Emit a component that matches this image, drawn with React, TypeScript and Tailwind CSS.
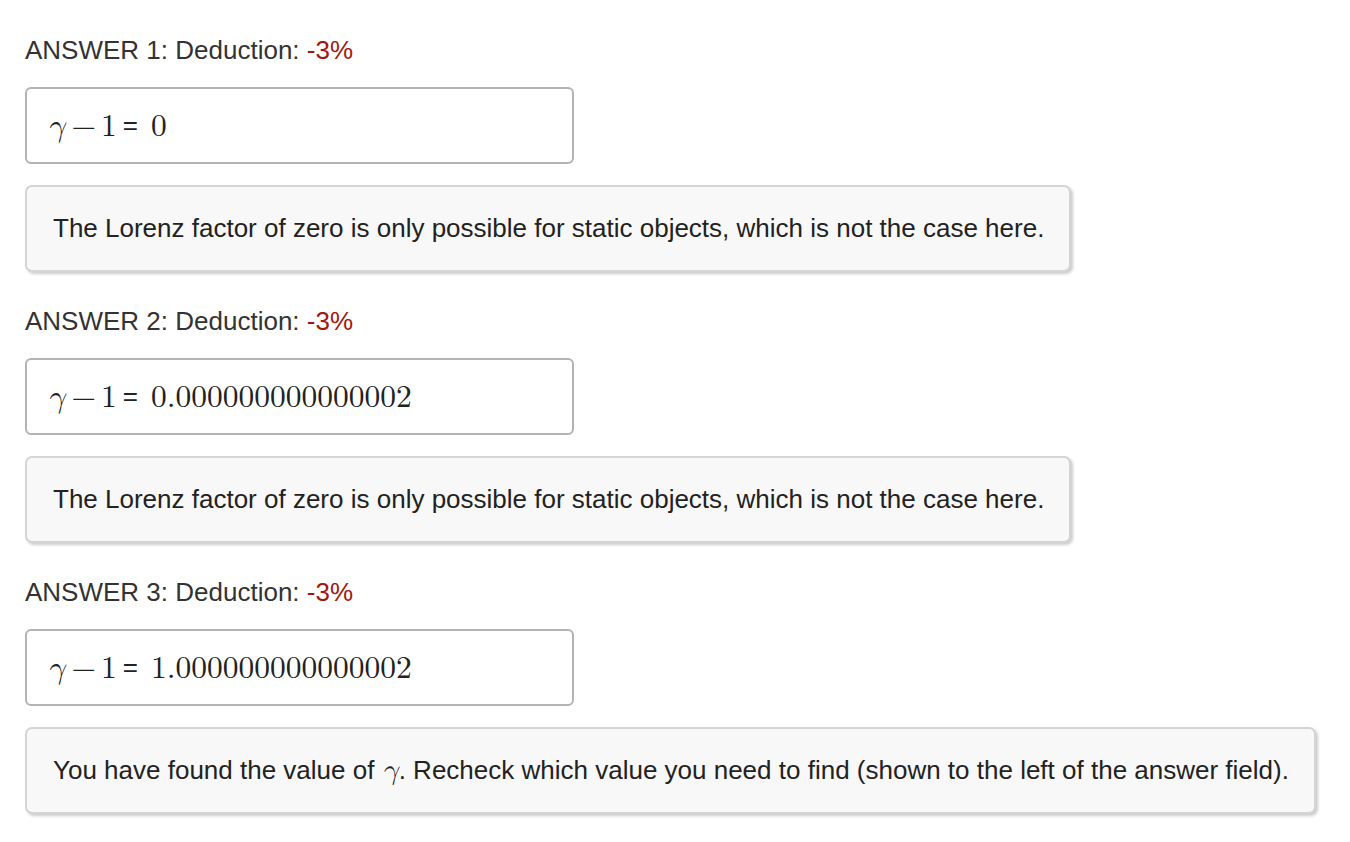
import React from "react";

function Answer({ n, value, feedback }: { n: number; value: string; feedback: React.ReactNode }) {
  return (
    <div className="flex flex-col">
      <div className="text-[26px] leading-[30px] text-[#333]">
        ANSWER {n}: Deduction: <span className="text-[#a3170e]">-3%</span>
      </div>
      <div className="mt-[22px] w-[549px] h-[77px] border-2 border-[#b3b3b3] rounded-[6px] flex items-center pl-[20px] text-[#222]">
        <span className="text-[31.5px] font-['Latin_Modern_Math',serif] flex items-baseline relative top-[1px]">
          <span className="italic">γ</span>
          <span className="ml-[6px]">−</span>
          <span className="ml-[5px]">1</span>
        </span>
        <span className="ml-[6px] text-[26px]">=</span>
        <span className="ml-[13px] text-[31.5px] font-['Latin_Modern_Math',serif] relative top-[1px]">{value}</span>
      </div>
      <div className="mt-[21px] self-start h-[87px] border-2 border-[#d4d4d4] rounded-[7px] bg-[#f8f8f8] shadow-[2px_2px_3px_rgba(0,0,0,0.2)] flex items-center pl-[26px] pr-[25px] text-[26px] text-[#222]">
        {feedback}
      </div>
    </div>
  );
}

export default function App() {
  const lor = "The Lorenz factor of zero is only possible for static objects, which is not the case here.";
  return (
    <div className="bg-white min-h-[842px] pl-[25px] pt-[35px] font-['Liberation_Sans',Arial,sans-serif] flex flex-col gap-[34px]">
      <Answer n={1} value="0" feedback={lor} />
      <Answer n={2} value="0.000000000000002" feedback={lor} />
      <Answer
        n={3}
        value="1.000000000000002"
        feedback={
          <span>
            You have found the value of <span className="italic text-[29px] font-['Latin_Modern_Math',serif]">γ</span>. Recheck which value you need to find (shown to the left of the answer field).
          </span>
        }
      />
    </div>
  );
}
